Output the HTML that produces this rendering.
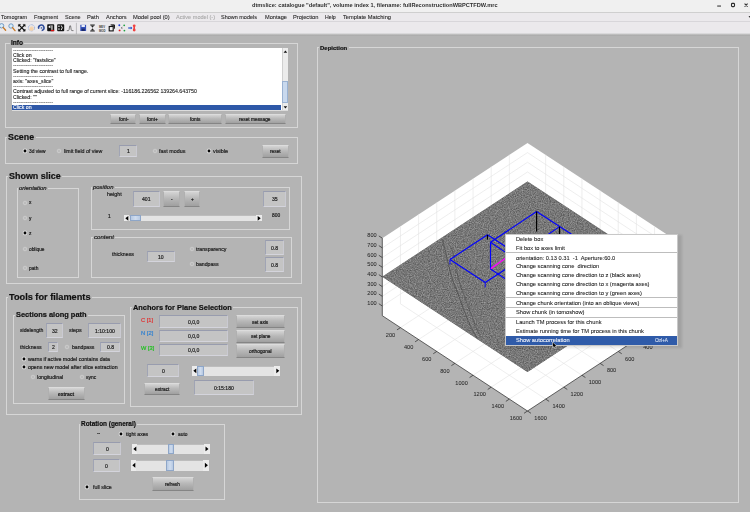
<!DOCTYPE html>
<html><head><meta charset="utf-8"><style>
html,body{margin:0;padding:0;}
body{width:750px;height:512px;overflow:hidden;position:relative;background:#b4b4b4;font-family:"Liberation Sans",sans-serif;}
.t{position:absolute;white-space:nowrap;-webkit-text-stroke:0.2px currentColor;will-change:transform;}
.r{position:absolute;}
</style></head><body>
<div class="r" style="left:0.00px;top:0.00px;width:750.00px;height:12.00px;background:#f0f0f0;"></div>
<div class="r" style="left:0.00px;top:11.50px;width:750.00px;height:1.00px;background:#cfcfcf;"></div>
<div class="r" style="left:0.00px;top:12.50px;width:750.00px;height:9.00px;background:#ebe9ec;"></div>
<div class="r" style="left:0.00px;top:21.20px;width:750.00px;height:0.80px;background:#d8d6da;"></div>
<div class="r" style="left:0.00px;top:22.00px;width:750.00px;height:11.00px;background:#ebe9ec;"></div>
<div class="r" style="left:0.00px;top:33.00px;width:750.00px;height:3.00px;background:linear-gradient(#e6e5e8,#c8c8c8 40%,#a8a8a8 70%,#b4b4b4);"></div>
<div class="t" style="left:252.30px;top:3.00px;font-size:5.64px;line-height:5.64px;font-weight:bold;color:#303030;-webkit-text-stroke:0px;">dtmslice: catalogue "default", volume index 1, filename: fullReconstructionWBPCTFDW.mrc</div>
<svg class="r" style="left:714px;top:0" width="36" height="12"><rect x="3.2" y="5.5" width="3.8" height="1.1" fill="#3a3a3a"/><rect x="17.5" y="3.4" width="3" height="3.2" rx="0.9" fill="none" stroke="#2a2a2a" stroke-width="1.1"/><path d="M30.6 3.6 L33.6 6.6 M33.6 3.6 L30.6 6.6" stroke="#2a2a2a" stroke-width="1.1"/></svg>
<div class="t" style="left:1.30px;top:15.00px;font-size:5.53px;line-height:5.53px;color:#2a2a2a;-webkit-text-stroke:0.1px currentColor;">Tomogram</div>
<div class="t" style="left:34.20px;top:15.00px;font-size:5.63px;line-height:5.63px;color:#2a2a2a;-webkit-text-stroke:0.1px currentColor;">Fragment</div>
<div class="t" style="left:65.40px;top:15.00px;font-size:5.50px;line-height:5.50px;color:#2a2a2a;-webkit-text-stroke:0.1px currentColor;">Scene</div>
<div class="t" style="left:87.40px;top:15.00px;font-size:5.79px;line-height:5.79px;color:#2a2a2a;-webkit-text-stroke:0.1px currentColor;">Path</div>
<div class="t" style="left:105.60px;top:15.00px;font-size:5.62px;line-height:5.62px;color:#2a2a2a;-webkit-text-stroke:0.1px currentColor;">Anchors</div>
<div class="t" style="left:132.50px;top:15.00px;font-size:5.74px;line-height:5.74px;color:#2a2a2a;-webkit-text-stroke:0.1px currentColor;">Model pool (0)</div>
<div class="t" style="left:175.60px;top:15.00px;font-size:5.58px;line-height:5.58px;color:#a8a8a8;-webkit-text-stroke:0.1px currentColor;">Active model (-)</div>
<div class="t" style="left:221.30px;top:15.00px;font-size:5.49px;line-height:5.49px;color:#2a2a2a;-webkit-text-stroke:0.1px currentColor;">Shown models</div>
<div class="t" style="left:264.80px;top:15.00px;font-size:5.63px;line-height:5.63px;color:#2a2a2a;-webkit-text-stroke:0.1px currentColor;">Montage</div>
<div class="t" style="left:293.30px;top:15.00px;font-size:5.71px;line-height:5.71px;color:#2a2a2a;-webkit-text-stroke:0.1px currentColor;">Projection</div>
<div class="t" style="left:325.30px;top:15.00px;font-size:5.20px;line-height:5.20px;color:#2a2a2a;-webkit-text-stroke:0.1px currentColor;">Help</div>
<div class="t" style="left:343.20px;top:15.00px;font-size:5.73px;line-height:5.73px;color:#2a2a2a;-webkit-text-stroke:0.1px currentColor;">Template Matching</div>
<svg class="r" style="left:747.5px;top:15px" width="5" height="5"><polygon points="0.5,1 4.5,1 2.5,3.6" fill="#333"/></svg>
<svg class="r" style="left:0;top:22px" width="140" height="13" viewBox="0 0 140 13">
 <circle cx="1.6" cy="3.8" r="2.2" fill="#d8ecfa" stroke="#5a86b8" stroke-width="0.8"/><line x1="3.1" y1="5.4" x2="5.6" y2="8.3" stroke="#c87a28" stroke-width="1.4" stroke-linecap="round"/>
 <circle cx="11" cy="4" r="2.2" fill="#d8ecfa" stroke="#5a86b8" stroke-width="0.8"/><line x1="12.5" y1="5.6" x2="15" y2="8.6" stroke="#c87a28" stroke-width="1.4" stroke-linecap="round"/>
 <path d="M19 3 L24.6 8.6 M24.6 3 L19 8.6" stroke="#111" stroke-width="1.2"/>
 <path d="M18.4 2.4 l2.2 0 l-2.2 2.2 z M25.2 2.4 l-2.2 0 l2.2 2.2 z M18.4 9.2 l2.2 0 l-2.2 -2.2 z M25.2 9.2 l-2.2 0 l2.2 -2.2 z" fill="#111" stroke="#111" stroke-width="0.4"/>
 <circle cx="31.5" cy="5.8" r="3.1" fill="none" stroke="#6f8fd0" stroke-width="0.7" stroke-dasharray="0.9 0.6"/>
 <path d="M29.6 8.6 C29.4 6.6 29.6 5 30.4 4.2 L30.8 6 L31.2 3.4 L31.8 5.8 L32.4 3.6 L32.8 6 L33.6 4.6 C33.8 6.4 33.4 8 32.6 8.8 Z" fill="#f6d2a8"/>
 <circle cx="41.3" cy="5.8" r="2.7" fill="none" stroke="#2c4a98" stroke-width="1.5" stroke-dasharray="13 4" transform="rotate(160 41.3 5.8)"/>
 <circle cx="41.5" cy="5.9" r="0.9" fill="#5670b0"/>
 <rect x="47.2" y="2.2" width="7" height="7" rx="0.8" fill="#141414"/><path d="M48.2 5 L50.4 3 L50.4 6.2 Z" fill="#fff"/><rect x="51.4" y="3.3" width="1.1" height="4.6" fill="#fff"/><rect x="50.8" y="7.9" width="3.4" height="1.3" fill="#d81010"/>
 <rect x="57.2" y="2.2" width="7" height="7" rx="0.8" fill="#141414"/><rect x="58.3" y="3.6" width="1.3" height="1.3" fill="#fff"/><rect x="58.3" y="6.4" width="1.3" height="1.3" fill="#fff"/><path d="M61.2 3.4 Q63.4 5.7 61.2 8" fill="none" stroke="#fff" stroke-width="0.9"/>
 <path d="M66.8 8.6 h1.6 q0.5 0 0.7 -1 l0.6 -3.6 q0.3 -1 0.9 0 l0.6 3.6 q0.2 1 0.7 1 h1.6" fill="none" stroke="#333" stroke-width="0.6"/>
 <line x1="76.4" y1="0.8" x2="76.4" y2="12.2" stroke="#9a9a9e" stroke-width="0.6"/>
 <rect x="80.3" y="2.8" width="5.8" height="6.2" fill="#3450b8"/><rect x="81.5" y="2.8" width="3.4" height="2.2" fill="#e6ecfa"/><rect x="81.6" y="6.6" width="3.2" height="2.4" fill="#1c2a6a"/>
 <path d="M90.2 3 h4.6 M90.2 9 h4.6" stroke="#111" stroke-width="0.9"/><path d="M90.8 3.4 L92.5 5.8 L94.2 3.4 Z M90.8 8.6 L92.5 6.2 L94.2 8.6 Z" fill="#222"/>
 <text x="99" y="5.8" font-size="2.8" font-family="Liberation Sans" font-weight="bold" fill="#3a3a3a">MEV</text><text x="99" y="9.6" font-size="2.8" font-family="Liberation Sans" font-weight="bold" fill="#3a3a3a">MOD</text>
 <path d="M110.6 2.9 h3.8 v3.8 M111.6 3.9 h2.8" fill="none" stroke="#111" stroke-width="1"/><rect x="109.2" y="4.5" width="4" height="4.4" fill="#f0f0f0" stroke="#111" stroke-width="1.1"/>
 <circle cx="119.3" cy="3.3" r="0.95" fill="#1a3ad8"/><circle cx="124.2" cy="3.3" r="0.9" fill="#20a040"/><path d="M121 5.2 L122.5 6.6 M122.5 5.2 L121 6.6" stroke="#333" stroke-width="0.5"/><circle cx="119.6" cy="8.4" r="0.95" fill="#e01818"/><circle cx="124.4" cy="8.6" r="0.9" fill="#20a040"/>
 <path d="M128.2 6 h3.2" stroke="#2050d0" stroke-width="1.2"/><polygon points="130.8,4.6 132.4,6 130.8,7.4" fill="#2050d0"/><circle cx="134.2" cy="3.8" r="1.4" fill="#f04040"/><circle cx="134.2" cy="8" r="1.4" fill="#f04040"/><rect x="133.4" y="4.8" width="1.6" height="2.4" fill="#f04040"/>
</svg>
<div class="r" style="left:5.00px;top:43.00px;width:293.00px;height:85.00px;border:1px solid #d6d6d6;box-sizing:border-box;"></div>
<div class="r" style="left:9.70px;top:42.60px;width:14.59px;height:2.40px;background:#b4b4b4;"></div>
<div class="t" style="left:10.70px;top:40.00px;font-size:6.60px;line-height:6.60px;font-weight:bold;color:#111;">Info</div>
<div class="r" style="left:12.00px;top:48.00px;width:276.20px;height:63.40px;background:#fff;border-bottom:1.2px solid #dcdcdc;box-sizing:border-box;"></div>
<div class="r" style="left:12.40px;top:104.80px;width:269.10px;height:5.20px;background:#2e58a8;"></div>
<div class="t" style="left:13.20px;top:48.00px;font-size:5.46px;line-height:5.46px;color:#333;-webkit-text-stroke:0.1px currentColor;">----------------------</div>
<div class="t" style="left:13.00px;top:53.00px;font-size:5.24px;line-height:5.24px;color:#1a1a1a;-webkit-text-stroke:0.1px currentColor;">Click on</div>
<div class="t" style="left:13.00px;top:58.00px;font-size:5.24px;line-height:5.24px;color:#1a1a1a;-webkit-text-stroke:0.1px currentColor;">Clicked: "fastslice"</div>
<div class="t" style="left:13.20px;top:63.00px;font-size:5.46px;line-height:5.46px;color:#333;-webkit-text-stroke:0.1px currentColor;">----------------------</div>
<div class="t" style="left:13.00px;top:69.00px;font-size:5.24px;line-height:5.24px;color:#1a1a1a;-webkit-text-stroke:0.1px currentColor;">Setting the contrast to full range.</div>
<div class="t" style="left:13.20px;top:74.00px;font-size:5.46px;line-height:5.46px;color:#333;-webkit-text-stroke:0.1px currentColor;">----------------------</div>
<div class="t" style="left:13.00px;top:79.00px;font-size:5.24px;line-height:5.24px;color:#1a1a1a;-webkit-text-stroke:0.1px currentColor;">axis: "axes_slice"</div>
<div class="t" style="left:13.20px;top:84.00px;font-size:5.46px;line-height:5.46px;color:#333;-webkit-text-stroke:0.1px currentColor;">----------------------</div>
<div class="t" style="left:13.00px;top:89.00px;font-size:5.24px;line-height:5.24px;color:#1a1a1a;-webkit-text-stroke:0.1px currentColor;">Contrast adjusted to full range of current slice: -116186.226562 139264.643750</div>
<div class="t" style="left:13.00px;top:95.00px;font-size:5.24px;line-height:5.24px;color:#1a1a1a;-webkit-text-stroke:0.1px currentColor;">Clicked: ""</div>
<div class="t" style="left:13.20px;top:100.00px;font-size:5.46px;line-height:5.46px;color:#333;-webkit-text-stroke:0.1px currentColor;">----------------------</div>
<div class="t" style="left:13.00px;top:105.00px;font-size:5.24px;line-height:5.24px;color:#fff;-webkit-text-stroke:0.1px currentColor;">Click on</div>
<div class="r" style="left:281.50px;top:48.00px;width:6.70px;height:62.30px;background:#ececec;border-left:0.6px solid #d0d0d0;box-sizing:border-box;"></div>
<div class="r" style="left:281.80px;top:80.80px;width:6.20px;height:22.50px;background:#c9d9ee;border:0.6px solid #9ab2d2;box-sizing:border-box;"></div>
<svg class="r" style="left:281.5px;top:48px" width="7" height="63"><polygon points="1.6,4.8 5.2,4.8 3.4,2.6" fill="#111"/><polygon points="1.6,58.2 5.2,58.2 3.4,60.4" fill="#111"/></svg>
<div class="r" style="left:110.30px;top:113.80px;width:26.10px;height:9.90px;background:linear-gradient(#d4d4d4,#b8b8b8 45%,#a0a0a0);border:1px solid #b0b0b0;border-bottom-color:#858585;border-top-color:#dcdcdc;box-sizing:border-box;border-radius:0.5px;"></div>
<div class="t" style="left:118.55px;top:118.00px;font-size:4.80px;line-height:4.80px;color:#1a1a1a;">font-</div>
<div class="r" style="left:139.20px;top:113.80px;width:26.50px;height:9.90px;background:linear-gradient(#d4d4d4,#b8b8b8 45%,#a0a0a0);border:1px solid #b0b0b0;border-bottom-color:#858585;border-top-color:#dcdcdc;box-sizing:border-box;border-radius:0.5px;"></div>
<div class="t" style="left:147.05px;top:118.00px;font-size:4.80px;line-height:4.80px;color:#1a1a1a;">font+</div>
<div class="r" style="left:168.10px;top:113.80px;width:53.60px;height:9.90px;background:linear-gradient(#d4d4d4,#b8b8b8 45%,#a0a0a0);border:1px solid #b0b0b0;border-bottom-color:#858585;border-top-color:#dcdcdc;box-sizing:border-box;border-radius:0.5px;"></div>
<div class="t" style="left:189.70px;top:118.00px;font-size:4.80px;line-height:4.80px;color:#1a1a1a;">fonts</div>
<div class="r" style="left:224.50px;top:113.80px;width:61.30px;height:9.90px;background:linear-gradient(#d4d4d4,#b8b8b8 45%,#a0a0a0);border:1px solid #b0b0b0;border-bottom-color:#858585;border-top-color:#dcdcdc;box-sizing:border-box;border-radius:0.5px;"></div>
<div class="t" style="left:239.41px;top:118.00px;font-size:4.80px;line-height:4.80px;color:#1a1a1a;">reset message</div>
<div class="r" style="left:5.00px;top:137.00px;width:293.00px;height:27.00px;border:1px solid #d6d6d6;box-sizing:border-box;"></div>
<div class="r" style="left:7.00px;top:136.10px;width:28.60px;height:2.40px;background:#b4b4b4;"></div>
<div class="t" style="left:8.00px;top:133.00px;font-size:8.86px;line-height:8.86px;font-weight:bold;color:#111;">Scene</div>
<svg class="r" style="left:21.60px;top:148.20px" width="6" height="6"><circle cx="3" cy="3" r="2.4" fill="#dcdcdc"/><circle cx="3" cy="3" r="1.4" fill="#050505"/></svg>
<div class="t" style="left:29.40px;top:150.00px;font-size:4.84px;line-height:4.84px;color:#1e1e1e;">3d view</div>
<svg class="r" style="left:56.20px;top:148.20px" width="6" height="6"><circle cx="3" cy="3" r="1.8" fill="#bcbcbc" stroke="#d2d2d2" stroke-width="0.7"/></svg>
<div class="t" style="left:63.60px;top:149.00px;font-size:5.28px;line-height:5.28px;color:#1e1e1e;">limit field of view</div>
<div class="r" style="left:119.40px;top:145.00px;width:17.60px;height:11.60px;background:#c4c4c4;border:1px solid #a0a4b4;border-top:1.3px solid #989cae;border-bottom-color:#d4d4dc;border-right-color:#cacad2;box-sizing:border-box;"></div>
<div class="t" style="left:126.78px;top:149.00px;font-size:5.10px;line-height:5.10px;color:#222;">1</div>
<svg class="r" style="left:151.90px;top:148.20px" width="6" height="6"><circle cx="3" cy="3" r="1.8" fill="#bcbcbc" stroke="#d2d2d2" stroke-width="0.7"/></svg>
<div class="t" style="left:158.80px;top:149.00px;font-size:5.40px;line-height:5.40px;color:#1e1e1e;">fast modus</div>
<svg class="r" style="left:205.70px;top:148.20px" width="6" height="6"><circle cx="3" cy="3" r="2.4" fill="#dcdcdc"/><circle cx="3" cy="3" r="1.4" fill="#050505"/></svg>
<div class="t" style="left:212.50px;top:149.00px;font-size:5.40px;line-height:5.40px;color:#1e1e1e;">visible</div>
<div class="r" style="left:261.60px;top:144.50px;width:27.30px;height:13.20px;background:linear-gradient(#d4d4d4,#b8b8b8 45%,#a0a0a0);border:1px solid #b0b0b0;border-bottom-color:#858585;border-top-color:#dcdcdc;box-sizing:border-box;border-radius:0.5px;"></div>
<div class="t" style="left:269.91px;top:150.00px;font-size:4.80px;line-height:4.80px;color:#1a1a1a;">reset</div>
<div class="r" style="left:6.00px;top:176.00px;width:296.00px;height:108.00px;border:1px solid #d6d6d6;box-sizing:border-box;"></div>
<div class="r" style="left:7.70px;top:175.00px;width:54.20px;height:2.40px;background:#b4b4b4;"></div>
<div class="t" style="left:8.70px;top:172.00px;font-size:8.95px;line-height:8.95px;font-weight:bold;color:#111;">Shown slice</div>
<div class="r" style="left:17.00px;top:188.00px;width:62.00px;height:90.00px;border:1px solid #d6d6d6;box-sizing:border-box;"></div>
<div class="r" style="left:18.20px;top:187.20px;width:30.10px;height:2.40px;background:#b4b4b4;"></div>
<div class="t" style="left:19.20px;top:186.00px;font-size:5.91px;line-height:5.91px;color:#1a1a1a;font-style:italic;">orientation</div>
<svg class="r" style="left:21.60px;top:199.50px" width="6" height="6"><circle cx="3" cy="3" r="1.8" fill="#bcbcbc" stroke="#d2d2d2" stroke-width="0.7"/></svg>
<div class="t" style="left:28.80px;top:201.00px;font-size:4.80px;line-height:4.80px;color:#1e1e1e;">x</div>
<svg class="r" style="left:21.60px;top:215.40px" width="6" height="6"><circle cx="3" cy="3" r="1.8" fill="#bcbcbc" stroke="#d2d2d2" stroke-width="0.7"/></svg>
<div class="t" style="left:28.80px;top:217.00px;font-size:4.80px;line-height:4.80px;color:#1e1e1e;">y</div>
<svg class="r" style="left:21.60px;top:230.40px" width="6" height="6"><circle cx="3" cy="3" r="2.4" fill="#dcdcdc"/><circle cx="3" cy="3" r="1.4" fill="#050505"/></svg>
<div class="t" style="left:28.80px;top:232.00px;font-size:4.80px;line-height:4.80px;color:#1e1e1e;">z</div>
<svg class="r" style="left:21.60px;top:245.60px" width="6" height="6"><circle cx="3" cy="3" r="1.8" fill="#bcbcbc" stroke="#d2d2d2" stroke-width="0.7"/></svg>
<div class="t" style="left:28.80px;top:248.00px;font-size:4.80px;line-height:4.80px;color:#1e1e1e;">oblique</div>
<svg class="r" style="left:21.60px;top:264.60px" width="6" height="6"><circle cx="3" cy="3" r="1.8" fill="#bcbcbc" stroke="#d2d2d2" stroke-width="0.7"/></svg>
<div class="t" style="left:28.80px;top:267.00px;font-size:4.80px;line-height:4.80px;color:#1e1e1e;">path</div>
<div class="r" style="left:91.00px;top:187.00px;width:199.00px;height:43.00px;border:1px solid #d6d6d6;box-sizing:border-box;"></div>
<div class="r" style="left:92.20px;top:186.10px;width:23.00px;height:2.40px;background:#b4b4b4;"></div>
<div class="t" style="left:93.20px;top:185.00px;font-size:5.95px;line-height:5.95px;color:#1a1a1a;font-style:italic;">position</div>
<div class="t" style="left:107.00px;top:192.00px;font-size:5.40px;line-height:5.40px;color:#1e1e1e;">height</div>
<div class="r" style="left:133.20px;top:191.10px;width:26.80px;height:15.70px;background:#c4c4c4;border:1px solid #a0a4b4;border-top:1.3px solid #989cae;border-bottom-color:#d4d4dc;border-right-color:#cacad2;box-sizing:border-box;"></div>
<div class="t" style="left:142.35px;top:197.00px;font-size:5.10px;line-height:5.10px;color:#222;">401</div>
<div class="r" style="left:163.10px;top:190.60px;width:16.70px;height:16.90px;background:linear-gradient(#d4d4d4,#b8b8b8 45%,#a0a0a0);border:1px solid #b0b0b0;border-bottom-color:#858585;border-top-color:#dcdcdc;box-sizing:border-box;border-radius:0.5px;"></div>
<div class="t" style="left:170.65px;top:198.00px;font-size:4.80px;line-height:4.80px;color:#1a1a1a;">-</div>
<div class="r" style="left:184.10px;top:190.60px;width:16.20px;height:16.90px;background:linear-gradient(#d4d4d4,#b8b8b8 45%,#a0a0a0);border:1px solid #b0b0b0;border-bottom-color:#858585;border-top-color:#dcdcdc;box-sizing:border-box;border-radius:0.5px;"></div>
<div class="t" style="left:190.80px;top:198.00px;font-size:4.80px;line-height:4.80px;color:#1a1a1a;">+</div>
<div class="r" style="left:263.40px;top:191.00px;width:22.50px;height:15.70px;background:#c4c4c4;border:1px solid #a0a4b4;border-top:1.3px solid #989cae;border-bottom-color:#d4d4dc;border-right-color:#cacad2;box-sizing:border-box;"></div>
<div class="t" style="left:271.81px;top:197.00px;font-size:5.10px;line-height:5.10px;color:#222;">35</div>
<div class="t" style="left:108.00px;top:215.00px;font-size:4.80px;line-height:4.80px;color:#1e1e1e;">1</div>
<div class="r" style="left:124.00px;top:214.60px;width:138.00px;height:6.60px;background:#e4e4e4;border-top:1px solid #bdbdbd;box-sizing:border-box;"></div>
<div class="r" style="left:124.00px;top:214.60px;width:5.00px;height:6.60px;background:#ececec;"></div>
<div class="r" style="left:256.00px;top:214.60px;width:6.00px;height:6.60px;background:#ececec;"></div>
<svg class="r" style="left:124.00px;top:214.60px" width="138.00" height="6.60"><polygon points="1.3,3.299999999999997 4.3,0.8999999999999972 4.3,5.6999999999999975" fill="#000"/><polygon points="136.7,3.299999999999997 133.7,0.8999999999999972 133.7,5.6999999999999975" fill="#000"/></svg>
<div class="r" style="left:129.60px;top:214.60px;width:11.10px;height:6.60px;background:linear-gradient(90deg,#b6c9e3,#cfdcee,#b6c9e3);border:0.8px solid #8ea6c8;box-sizing:border-box;"></div>
<div class="t" style="left:271.90px;top:214.00px;font-size:4.86px;line-height:4.86px;color:#1e1e1e;">800</div>
<div class="r" style="left:91.00px;top:237.00px;width:201.00px;height:41.00px;border:1px solid #d6d6d6;box-sizing:border-box;"></div>
<div class="r" style="left:92.80px;top:236.10px;width:22.40px;height:2.40px;background:#b4b4b4;"></div>
<div class="t" style="left:93.80px;top:234.00px;font-size:6.07px;line-height:6.07px;color:#1a1a1a;font-style:italic;">content</div>
<div class="t" style="left:112.00px;top:252.00px;font-size:5.28px;line-height:5.28px;color:#1e1e1e;">thickness</div>
<div class="r" style="left:147.20px;top:251.40px;width:27.80px;height:10.90px;background:#c4c4c4;border:1px solid #a0a4b4;border-top:1.3px solid #989cae;border-bottom-color:#d4d4dc;border-right-color:#cacad2;box-sizing:border-box;"></div>
<div class="t" style="left:158.26px;top:255.00px;font-size:5.10px;line-height:5.10px;color:#222;">10</div>
<svg class="r" style="left:188.50px;top:245.50px" width="6" height="6"><circle cx="3" cy="3" r="1.8" fill="#bcbcbc" stroke="#d2d2d2" stroke-width="0.7"/></svg>
<div class="t" style="left:195.90px;top:247.00px;font-size:5.28px;line-height:5.28px;color:#1e1e1e;">transparency</div>
<svg class="r" style="left:188.50px;top:261.00px" width="6" height="6"><circle cx="3" cy="3" r="1.8" fill="#bcbcbc" stroke="#d2d2d2" stroke-width="0.7"/></svg>
<div class="t" style="left:195.90px;top:262.00px;font-size:5.21px;line-height:5.21px;color:#1e1e1e;">bandpass</div>
<div class="r" style="left:264.50px;top:240.30px;width:19.10px;height:15.20px;background:#c4c4c4;border:1px solid #a0a4b4;border-top:1.3px solid #989cae;border-bottom-color:#d4d4dc;border-right-color:#cacad2;box-sizing:border-box;"></div>
<div class="t" style="left:270.51px;top:246.00px;font-size:5.10px;line-height:5.10px;color:#222;">0.8</div>
<div class="r" style="left:264.50px;top:256.70px;width:19.10px;height:15.80px;background:#c4c4c4;border:1px solid #a0a4b4;border-top:1.3px solid #989cae;border-bottom-color:#d4d4dc;border-right-color:#cacad2;box-sizing:border-box;"></div>
<div class="t" style="left:270.51px;top:263.00px;font-size:5.10px;line-height:5.10px;color:#222;">0.8</div>
<div class="r" style="left:6.00px;top:297.00px;width:296.00px;height:118.00px;border:1px solid #d6d6d6;box-sizing:border-box;"></div>
<div class="r" style="left:8.40px;top:296.60px;width:84.10px;height:2.40px;background:#b4b4b4;"></div>
<div class="t" style="left:9.40px;top:293.00px;font-size:9.20px;line-height:9.20px;font-weight:bold;color:#111;">Tools for filaments</div>
<div class="r" style="left:13.00px;top:315.00px;width:112.00px;height:89.00px;border:1px solid #d6d6d6;box-sizing:border-box;"></div>
<div class="r" style="left:14.80px;top:314.40px;width:73.10px;height:2.40px;background:#b4b4b4;"></div>
<div class="t" style="left:15.80px;top:311.00px;font-size:7.43px;line-height:7.43px;font-weight:bold;color:#111;">Sections along path</div>
<div class="t" style="left:19.80px;top:328.00px;font-size:5.13px;line-height:5.13px;color:#1e1e1e;">sidelength</div>
<div class="r" style="left:46.20px;top:323.20px;width:17.30px;height:14.80px;background:#c4c4c4;border:1px solid #a0a4b4;border-top:1.3px solid #989cae;border-bottom-color:#d4d4dc;border-right-color:#cacad2;box-sizing:border-box;"></div>
<div class="t" style="left:52.01px;top:329.00px;font-size:5.10px;line-height:5.10px;color:#222;">32</div>
<div class="t" style="left:69.10px;top:328.00px;font-size:5.31px;line-height:5.31px;color:#1e1e1e;">steps</div>
<div class="r" style="left:88.40px;top:323.00px;width:32.30px;height:15.00px;background:#c4c4c4;border:1px solid #a0a4b4;border-top:1.3px solid #989cae;border-bottom-color:#d4d4dc;border-right-color:#cacad2;box-sizing:border-box;"></div>
<div class="t" style="left:94.62px;top:329.00px;font-size:5.10px;line-height:5.10px;color:#222;">1:10:100</div>
<div class="t" style="left:20.30px;top:345.00px;font-size:5.18px;line-height:5.18px;color:#1e1e1e;">thickness</div>
<div class="r" style="left:47.80px;top:341.70px;width:10.60px;height:9.90px;background:#c4c4c4;border:1px solid #a0a4b4;border-top:1.3px solid #989cae;border-bottom-color:#d4d4dc;border-right-color:#cacad2;box-sizing:border-box;"></div>
<div class="t" style="left:51.68px;top:345.00px;font-size:5.10px;line-height:5.10px;color:#222;">2</div>
<svg class="r" style="left:64.30px;top:343.60px" width="6" height="6"><circle cx="3" cy="3" r="1.8" fill="#bcbcbc" stroke="#d2d2d2" stroke-width="0.7"/></svg>
<div class="t" style="left:71.60px;top:345.00px;font-size:5.17px;line-height:5.17px;color:#1e1e1e;">bandpass</div>
<div class="r" style="left:100.40px;top:341.70px;width:19.80px;height:9.90px;background:#c4c4c4;border:1px solid #a0a4b4;border-top:1.3px solid #989cae;border-bottom-color:#d4d4dc;border-right-color:#cacad2;box-sizing:border-box;"></div>
<div class="t" style="left:106.76px;top:345.00px;font-size:5.10px;line-height:5.10px;color:#222;">0.8</div>
<svg class="r" style="left:20.60px;top:356.00px" width="6" height="6"><circle cx="3" cy="3" r="2.4" fill="#dcdcdc"/><circle cx="3" cy="3" r="1.4" fill="#050505"/></svg>
<div class="t" style="left:27.90px;top:357.00px;font-size:5.28px;line-height:5.28px;color:#1e1e1e;">warns if active model contains data</div>
<svg class="r" style="left:20.60px;top:364.10px" width="6" height="6"><circle cx="3" cy="3" r="2.4" fill="#dcdcdc"/><circle cx="3" cy="3" r="1.4" fill="#050505"/></svg>
<div class="t" style="left:27.90px;top:365.00px;font-size:5.27px;line-height:5.27px;color:#1e1e1e;">opens new model after slice extraction</div>
<svg class="r" style="left:30.00px;top:373.80px" width="6" height="6"><circle cx="3" cy="3" r="1.8" fill="#bcbcbc" stroke="#d2d2d2" stroke-width="0.7"/></svg>
<div class="t" style="left:37.30px;top:375.00px;font-size:5.18px;line-height:5.18px;color:#1e1e1e;">longitudinal</div>
<svg class="r" style="left:78.80px;top:373.80px" width="6" height="6"><circle cx="3" cy="3" r="1.8" fill="#bcbcbc" stroke="#d2d2d2" stroke-width="0.7"/></svg>
<div class="t" style="left:86.40px;top:376.00px;font-size:4.91px;line-height:4.91px;color:#1e1e1e;">sync</div>
<div class="r" style="left:47.80px;top:387.20px;width:36.80px;height:12.80px;background:linear-gradient(#d4d4d4,#b8b8b8 45%,#a0a0a0);border:1px solid #b0b0b0;border-bottom-color:#858585;border-top-color:#dcdcdc;box-sizing:border-box;border-radius:0.5px;"></div>
<div class="t" style="left:58.17px;top:393.00px;font-size:4.90px;line-height:4.90px;font-weight:bold;color:#1a1a1a;">extract</div>
<div class="r" style="left:130.00px;top:307.00px;width:168.00px;height:100.00px;border:1px solid #d6d6d6;box-sizing:border-box;"></div>
<div class="r" style="left:132.20px;top:306.50px;width:101.30px;height:2.40px;background:#b4b4b4;"></div>
<div class="t" style="left:133.20px;top:304.00px;font-size:7.41px;line-height:7.41px;font-weight:bold;color:#111;">Anchors for Plane Selection</div>
<div class="t" style="left:140.80px;top:318.00px;font-size:5.78px;line-height:5.78px;color:#e03030;">C [1]</div>
<div class="t" style="left:140.80px;top:331.00px;font-size:5.87px;line-height:5.87px;color:#3080d0;">N [2]</div>
<div class="t" style="left:140.80px;top:346.00px;font-size:5.66px;line-height:5.66px;color:#20c020;">W [3]</div>
<div class="r" style="left:159.30px;top:315.30px;width:69.10px;height:12.70px;background:#c4c4c4;border:1px solid #a0a4b4;border-top:1.3px solid #989cae;border-bottom-color:#d4d4dc;border-right-color:#cacad2;box-sizing:border-box;"></div>
<div class="t" style="left:188.18px;top:320.00px;font-size:5.10px;line-height:5.10px;color:#222;">0,0,0</div>
<div class="r" style="left:159.30px;top:329.80px;width:69.10px;height:12.60px;background:#c4c4c4;border:1px solid #a0a4b4;border-top:1.3px solid #989cae;border-bottom-color:#d4d4dc;border-right-color:#cacad2;box-sizing:border-box;"></div>
<div class="t" style="left:188.18px;top:334.00px;font-size:5.10px;line-height:5.10px;color:#222;">0,0,0</div>
<div class="r" style="left:159.30px;top:343.70px;width:69.10px;height:12.70px;background:#c4c4c4;border:1px solid #a0a4b4;border-top:1.3px solid #989cae;border-bottom-color:#d4d4dc;border-right-color:#cacad2;box-sizing:border-box;"></div>
<div class="t" style="left:188.18px;top:348.00px;font-size:5.10px;line-height:5.10px;color:#222;">0,0,0</div>
<div class="r" style="left:236.00px;top:314.80px;width:48.70px;height:13.70px;background:linear-gradient(#d4d4d4,#b8b8b8 45%,#a0a0a0);border:1px solid #b0b0b0;border-bottom-color:#858585;border-top-color:#dcdcdc;box-sizing:border-box;border-radius:0.5px;"></div>
<div class="t" style="left:252.21px;top:321.00px;font-size:4.80px;line-height:4.80px;color:#1a1a1a;">set axis</div>
<div class="r" style="left:236.00px;top:329.80px;width:48.70px;height:12.90px;background:linear-gradient(#d4d4d4,#b8b8b8 45%,#a0a0a0);border:1px solid #b0b0b0;border-bottom-color:#858585;border-top-color:#dcdcdc;box-sizing:border-box;border-radius:0.5px;"></div>
<div class="t" style="left:250.61px;top:335.00px;font-size:4.80px;line-height:4.80px;color:#1a1a1a;">set plane</div>
<div class="r" style="left:236.00px;top:344.00px;width:48.70px;height:13.60px;background:linear-gradient(#d4d4d4,#b8b8b8 45%,#a0a0a0);border:1px solid #b0b0b0;border-bottom-color:#858585;border-top-color:#dcdcdc;box-sizing:border-box;border-radius:0.5px;"></div>
<div class="t" style="left:249.01px;top:350.00px;font-size:4.80px;line-height:4.80px;color:#1a1a1a;">orthogonal</div>
<div class="r" style="left:147.10px;top:364.20px;width:31.70px;height:12.70px;background:#c4c4c4;border:1px solid #a0a4b4;border-top:1.3px solid #989cae;border-bottom-color:#d4d4dc;border-right-color:#cacad2;box-sizing:border-box;"></div>
<div class="t" style="left:161.53px;top:369.00px;font-size:5.10px;line-height:5.10px;color:#222;">0</div>
<div class="r" style="left:191.70px;top:366.40px;width:88.60px;height:9.70px;background:#e4e4e4;border-top:1px solid #bdbdbd;box-sizing:border-box;"></div>
<div class="r" style="left:191.70px;top:366.40px;width:5.00px;height:9.70px;background:#ececec;"></div>
<div class="r" style="left:274.30px;top:366.40px;width:6.00px;height:9.70px;background:#ececec;"></div>
<svg class="r" style="left:191.70px;top:366.40px" width="88.60" height="9.70"><polygon points="1.3,4.850000000000023 4.3,2.450000000000023 4.3,7.250000000000023" fill="#000"/><polygon points="87.30000000000003,4.850000000000023 84.30000000000003,2.450000000000023 84.30000000000003,7.250000000000023" fill="#000"/></svg>
<div class="r" style="left:197.30px;top:366.40px;width:7.00px;height:9.70px;background:linear-gradient(90deg,#b6c9e3,#cfdcee,#b6c9e3);border:0.8px solid #8ea6c8;box-sizing:border-box;"></div>
<div class="r" style="left:144.00px;top:382.70px;width:36.00px;height:11.90px;background:linear-gradient(#d4d4d4,#b8b8b8 45%,#a0a0a0);border:1px solid #b0b0b0;border-bottom-color:#858585;border-top-color:#dcdcdc;box-sizing:border-box;border-radius:0.5px;"></div>
<div class="t" style="left:154.80px;top:388.00px;font-size:4.80px;line-height:4.80px;color:#1a1a1a;">extract</div>
<div class="r" style="left:193.50px;top:380.40px;width:60.80px;height:14.20px;background:#c4c4c4;border:1px solid #a0a4b4;border-top:1.3px solid #989cae;border-bottom-color:#d4d4dc;border-right-color:#cacad2;box-sizing:border-box;"></div>
<div class="t" style="left:213.97px;top:386.00px;font-size:5.10px;line-height:5.10px;color:#222;">0:15:180</div>
<div class="r" style="left:79.00px;top:424.00px;width:146.00px;height:76.00px;border:1px solid #d6d6d6;box-sizing:border-box;"></div>
<div class="r" style="left:79.90px;top:423.50px;width:57.40px;height:2.40px;background:#b4b4b4;"></div>
<div class="t" style="left:80.90px;top:421.00px;font-size:6.42px;line-height:6.42px;font-weight:bold;color:#111;">Rotation (general)</div>
<div class="t" style="left:97.20px;top:432.00px;font-size:4.80px;line-height:4.80px;color:#1e1e1e;">--</div>
<svg class="r" style="left:118.20px;top:431.00px" width="6" height="6"><circle cx="3" cy="3" r="2.4" fill="#dcdcdc"/><circle cx="3" cy="3" r="1.4" fill="#050505"/></svg>
<div class="t" style="left:125.60px;top:432.00px;font-size:5.19px;line-height:5.19px;color:#1e1e1e;">tight axes</div>
<svg class="r" style="left:169.50px;top:431.00px" width="6" height="6"><circle cx="3" cy="3" r="2.4" fill="#dcdcdc"/><circle cx="3" cy="3" r="1.4" fill="#050505"/></svg>
<div class="t" style="left:178.40px;top:433.00px;font-size:4.88px;line-height:4.88px;color:#1e1e1e;">auto</div>
<div class="r" style="left:93.40px;top:442.40px;width:27.60px;height:12.30px;background:#c4c4c4;border:1px solid #a0a4b4;border-top:1.3px solid #989cae;border-bottom-color:#d4d4dc;border-right-color:#cacad2;box-sizing:border-box;"></div>
<div class="t" style="left:105.78px;top:447.00px;font-size:5.10px;line-height:5.10px;color:#222;">0</div>
<div class="r" style="left:131.70px;top:444.00px;width:77.80px;height:9.80px;background:#e4e4e4;border-top:1px solid #bdbdbd;box-sizing:border-box;"></div>
<div class="r" style="left:131.70px;top:444.00px;width:5.00px;height:9.80px;background:#ececec;"></div>
<div class="r" style="left:203.50px;top:444.00px;width:6.00px;height:9.80px;background:#ececec;"></div>
<svg class="r" style="left:131.70px;top:444.00px" width="77.80" height="9.80"><polygon points="1.3,4.900000000000006 4.3,2.5000000000000058 4.3,7.300000000000006" fill="#000"/><polygon points="76.50000000000001,4.900000000000006 73.50000000000001,2.5000000000000058 73.50000000000001,7.300000000000006" fill="#000"/></svg>
<div class="r" style="left:167.50px;top:444.00px;width:6.80px;height:9.80px;background:linear-gradient(90deg,#b6c9e3,#cfdcee,#b6c9e3);border:0.8px solid #8ea6c8;box-sizing:border-box;"></div>
<div class="r" style="left:93.40px;top:459.20px;width:26.90px;height:12.50px;background:#c4c4c4;border:1px solid #a0a4b4;border-top:1.3px solid #989cae;border-bottom-color:#d4d4dc;border-right-color:#cacad2;box-sizing:border-box;"></div>
<div class="t" style="left:105.43px;top:464.00px;font-size:5.10px;line-height:5.10px;color:#222;">0</div>
<div class="r" style="left:130.80px;top:460.30px;width:78.20px;height:10.50px;background:#e4e4e4;border-top:1px solid #bdbdbd;box-sizing:border-box;"></div>
<div class="r" style="left:130.80px;top:460.30px;width:5.00px;height:10.50px;background:#ececec;"></div>
<div class="r" style="left:203.00px;top:460.30px;width:6.00px;height:10.50px;background:#ececec;"></div>
<svg class="r" style="left:130.80px;top:460.30px" width="78.20" height="10.50"><polygon points="1.3,5.25 4.3,2.85 4.3,7.65" fill="#000"/><polygon points="76.89999999999999,5.25 73.89999999999999,2.85 73.89999999999999,7.65" fill="#000"/></svg>
<div class="r" style="left:166.40px;top:460.30px;width:7.20px;height:10.50px;background:linear-gradient(90deg,#b6c9e3,#cfdcee,#b6c9e3);border:0.8px solid #8ea6c8;box-sizing:border-box;"></div>
<svg class="r" style="left:83.60px;top:483.60px" width="6" height="6"><circle cx="3" cy="3" r="2.4" fill="#dcdcdc"/><circle cx="3" cy="3" r="1.4" fill="#050505"/></svg>
<div class="t" style="left:92.70px;top:485.00px;font-size:5.29px;line-height:5.29px;color:#1e1e1e;">full slice</div>
<div class="r" style="left:152.00px;top:477.30px;width:41.60px;height:13.70px;background:linear-gradient(#d4d4d4,#b8b8b8 45%,#a0a0a0);border:1px solid #b0b0b0;border-bottom-color:#858585;border-top-color:#dcdcdc;box-sizing:border-box;border-radius:0.5px;"></div>
<div class="t" style="left:165.33px;top:483.00px;font-size:4.80px;line-height:4.80px;color:#1a1a1a;">refresh</div>
<div class="r" style="left:317.00px;top:47.00px;width:422.00px;height:456.00px;border:1px solid #d6d6d6;box-sizing:border-box;"></div>
<div class="r" style="left:319.00px;top:46.40px;width:29.70px;height:2.40px;background:#b4b4b4;"></div>
<div class="t" style="left:320.00px;top:46.00px;font-size:5.97px;line-height:5.97px;font-weight:bold;color:#111;">Depiction</div>
<svg class="r" style="left:0;top:0" width="750" height="512" viewBox="0 0 750 512"><polygon points="527.50,142.90 382.30,238.20 382.30,315.70 527.50,411.00 672.70,315.70 672.70,238.20" fill="#ffffff"/><line x1="509.35" y1="232.31" x2="509.35" y2="154.81" stroke="#e3e3e3" stroke-width="0.6"/><line x1="545.65" y1="232.31" x2="545.65" y2="154.81" stroke="#e3e3e3" stroke-width="0.6"/><line x1="491.20" y1="244.22" x2="491.20" y2="166.72" stroke="#e3e3e3" stroke-width="0.6"/><line x1="563.80" y1="244.22" x2="563.80" y2="166.72" stroke="#e3e3e3" stroke-width="0.6"/><line x1="473.05" y1="256.14" x2="473.05" y2="178.64" stroke="#e3e3e3" stroke-width="0.6"/><line x1="581.95" y1="256.14" x2="581.95" y2="178.64" stroke="#e3e3e3" stroke-width="0.6"/><line x1="454.90" y1="268.05" x2="454.90" y2="190.55" stroke="#e3e3e3" stroke-width="0.6"/><line x1="600.10" y1="268.05" x2="600.10" y2="190.55" stroke="#e3e3e3" stroke-width="0.6"/><line x1="436.75" y1="279.96" x2="436.75" y2="202.46" stroke="#e3e3e3" stroke-width="0.6"/><line x1="618.25" y1="279.96" x2="618.25" y2="202.46" stroke="#e3e3e3" stroke-width="0.6"/><line x1="418.60" y1="291.88" x2="418.60" y2="214.38" stroke="#e3e3e3" stroke-width="0.6"/><line x1="636.40" y1="291.88" x2="636.40" y2="214.38" stroke="#e3e3e3" stroke-width="0.6"/><line x1="400.45" y1="303.79" x2="400.45" y2="226.29" stroke="#e3e3e3" stroke-width="0.6"/><line x1="654.55" y1="303.79" x2="654.55" y2="226.29" stroke="#e3e3e3" stroke-width="0.6"/><line x1="382.30" y1="306.01" x2="527.50" y2="210.71" stroke="#e3e3e3" stroke-width="0.6"/><line x1="672.70" y1="306.01" x2="527.50" y2="210.71" stroke="#e3e3e3" stroke-width="0.6"/><line x1="382.30" y1="296.32" x2="527.50" y2="201.03" stroke="#e3e3e3" stroke-width="0.6"/><line x1="672.70" y1="296.32" x2="527.50" y2="201.03" stroke="#e3e3e3" stroke-width="0.6"/><line x1="382.30" y1="286.64" x2="527.50" y2="191.34" stroke="#e3e3e3" stroke-width="0.6"/><line x1="672.70" y1="286.64" x2="527.50" y2="191.34" stroke="#e3e3e3" stroke-width="0.6"/><line x1="382.30" y1="276.95" x2="527.50" y2="181.65" stroke="#e3e3e3" stroke-width="0.6"/><line x1="672.70" y1="276.95" x2="527.50" y2="181.65" stroke="#e3e3e3" stroke-width="0.6"/><line x1="382.30" y1="267.26" x2="527.50" y2="171.96" stroke="#e3e3e3" stroke-width="0.6"/><line x1="672.70" y1="267.26" x2="527.50" y2="171.96" stroke="#e3e3e3" stroke-width="0.6"/><line x1="382.30" y1="257.57" x2="527.50" y2="162.28" stroke="#e3e3e3" stroke-width="0.6"/><line x1="672.70" y1="257.57" x2="527.50" y2="162.28" stroke="#e3e3e3" stroke-width="0.6"/><line x1="382.30" y1="247.89" x2="527.50" y2="152.59" stroke="#e3e3e3" stroke-width="0.6"/><line x1="672.70" y1="247.89" x2="527.50" y2="152.59" stroke="#e3e3e3" stroke-width="0.6"/><line x1="509.35" y1="232.31" x2="654.55" y2="327.61" stroke="#e3e3e3" stroke-width="0.6"/><line x1="545.65" y1="232.31" x2="400.45" y2="327.61" stroke="#e3e3e3" stroke-width="0.6"/><line x1="491.20" y1="244.22" x2="636.40" y2="339.52" stroke="#e3e3e3" stroke-width="0.6"/><line x1="563.80" y1="244.22" x2="418.60" y2="339.52" stroke="#e3e3e3" stroke-width="0.6"/><line x1="473.05" y1="256.14" x2="618.25" y2="351.44" stroke="#e3e3e3" stroke-width="0.6"/><line x1="581.95" y1="256.14" x2="436.75" y2="351.44" stroke="#e3e3e3" stroke-width="0.6"/><line x1="454.90" y1="268.05" x2="600.10" y2="363.35" stroke="#e3e3e3" stroke-width="0.6"/><line x1="600.10" y1="268.05" x2="454.90" y2="363.35" stroke="#e3e3e3" stroke-width="0.6"/><line x1="436.75" y1="279.96" x2="581.95" y2="375.26" stroke="#e3e3e3" stroke-width="0.6"/><line x1="618.25" y1="279.96" x2="473.05" y2="375.26" stroke="#e3e3e3" stroke-width="0.6"/><line x1="418.60" y1="291.88" x2="563.80" y2="387.18" stroke="#e3e3e3" stroke-width="0.6"/><line x1="636.40" y1="291.88" x2="491.20" y2="387.18" stroke="#e3e3e3" stroke-width="0.6"/><line x1="400.45" y1="303.79" x2="545.65" y2="399.09" stroke="#e3e3e3" stroke-width="0.6"/><line x1="654.55" y1="303.79" x2="509.35" y2="399.09" stroke="#e3e3e3" stroke-width="0.6"/><defs><filter id="nz" x="0" y="0" width="1" height="1" color-interpolation-filters="sRGB"><feTurbulence type="fractalNoise" baseFrequency="0.85" numOctaves="2" seed="5"/><feColorMatrix type="matrix" values="0.4 0 0 0 0.27  0.4 0 0 0 0.27  0.4 0 0 0 0.27  0 0 0 0 1"/><feGaussianBlur stdDeviation="0.25"/></filter><clipPath id="sc"><polygon points="527.50,181.40 382.30,276.70 527.50,372.00 672.70,276.70"/></clipPath></defs><polygon points="527.50,181.40 382.30,276.70 527.50,372.00 672.70,276.70" fill="#7a7a7a"/><g clip-path="url(#sc)"><rect x="380" y="180" width="296" height="195" filter="url(#nz)"/><path d="M442.5 238.8 C447 258 450 274 455 286 S466 318 474 333 L480 343" fill="none" stroke="#404040" stroke-width="1" opacity="0.6"/><path d="M444 238.8 C448.5 258 451.5 274 456.5 286 S467.5 318 475.5 333 L481.5 343" fill="none" stroke="#a8a8a8" stroke-width="0.6" opacity="0.35"/><path d="M451.9 248 C455 262 458 280 462 290 S472 318 480 336" fill="none" stroke="#404040" stroke-width="0.9" opacity="0.5"/></g><line x1="382.30" y1="238.20" x2="382.30" y2="315.70" stroke="#262626" stroke-width="0.7"/><line x1="382.30" y1="315.70" x2="527.50" y2="411.00" stroke="#262626" stroke-width="0.7"/><line x1="527.50" y1="411.00" x2="672.70" y2="315.70" stroke="#262626" stroke-width="0.7"/><line x1="382.30" y1="306.01" x2="378.82" y2="303.73" stroke="#262626" stroke-width="0.7"/><text x="372.00" y="305.13" font-size="5.6" text-anchor="middle" fill="#2a2a2a" stroke="#2a2a2a" stroke-width="0.05" font-family="Liberation Sans">100</text><line x1="382.30" y1="296.32" x2="378.82" y2="294.04" stroke="#262626" stroke-width="0.7"/><text x="372.00" y="295.44" font-size="5.6" text-anchor="middle" fill="#2a2a2a" stroke="#2a2a2a" stroke-width="0.05" font-family="Liberation Sans">200</text><line x1="382.30" y1="286.64" x2="378.82" y2="284.35" stroke="#262626" stroke-width="0.7"/><text x="372.00" y="285.75" font-size="5.6" text-anchor="middle" fill="#2a2a2a" stroke="#2a2a2a" stroke-width="0.05" font-family="Liberation Sans">300</text><line x1="382.30" y1="276.95" x2="378.82" y2="274.66" stroke="#262626" stroke-width="0.7"/><text x="372.00" y="276.07" font-size="5.6" text-anchor="middle" fill="#2a2a2a" stroke="#2a2a2a" stroke-width="0.05" font-family="Liberation Sans">400</text><line x1="382.30" y1="267.26" x2="378.82" y2="264.98" stroke="#262626" stroke-width="0.7"/><text x="372.00" y="266.38" font-size="5.6" text-anchor="middle" fill="#2a2a2a" stroke="#2a2a2a" stroke-width="0.05" font-family="Liberation Sans">500</text><line x1="382.30" y1="257.57" x2="378.82" y2="255.29" stroke="#262626" stroke-width="0.7"/><text x="372.00" y="256.69" font-size="5.6" text-anchor="middle" fill="#2a2a2a" stroke="#2a2a2a" stroke-width="0.05" font-family="Liberation Sans">600</text><line x1="382.30" y1="247.89" x2="378.82" y2="245.60" stroke="#262626" stroke-width="0.7"/><text x="372.00" y="247.00" font-size="5.6" text-anchor="middle" fill="#2a2a2a" stroke="#2a2a2a" stroke-width="0.05" font-family="Liberation Sans">700</text><line x1="382.30" y1="238.20" x2="378.82" y2="235.91" stroke="#262626" stroke-width="0.7"/><text x="372.00" y="237.32" font-size="5.6" text-anchor="middle" fill="#2a2a2a" stroke="#2a2a2a" stroke-width="0.05" font-family="Liberation Sans">800</text><line x1="400.45" y1="327.61" x2="396.97" y2="329.90" stroke="#262626" stroke-width="0.7"/><text x="395.15" y="336.93" font-size="5.6" text-anchor="end" fill="#2a2a2a" stroke="#2a2a2a" stroke-width="0.05" font-family="Liberation Sans">200</text><line x1="654.55" y1="327.61" x2="658.03" y2="329.90" stroke="#262626" stroke-width="0.7"/><text x="661.35" y="336.73" font-size="5.6" text-anchor="start" fill="#2a2a2a" stroke="#2a2a2a" stroke-width="0.05" font-family="Liberation Sans">200</text><line x1="418.60" y1="339.52" x2="415.12" y2="341.81" stroke="#262626" stroke-width="0.7"/><text x="413.30" y="348.84" font-size="5.6" text-anchor="end" fill="#2a2a2a" stroke="#2a2a2a" stroke-width="0.05" font-family="Liberation Sans">400</text><line x1="636.40" y1="339.52" x2="639.88" y2="341.81" stroke="#262626" stroke-width="0.7"/><text x="643.20" y="348.64" font-size="5.6" text-anchor="start" fill="#2a2a2a" stroke="#2a2a2a" stroke-width="0.05" font-family="Liberation Sans">400</text><line x1="436.75" y1="351.44" x2="433.27" y2="353.72" stroke="#262626" stroke-width="0.7"/><text x="431.45" y="360.75" font-size="5.6" text-anchor="end" fill="#2a2a2a" stroke="#2a2a2a" stroke-width="0.05" font-family="Liberation Sans">600</text><line x1="618.25" y1="351.44" x2="621.73" y2="353.72" stroke="#262626" stroke-width="0.7"/><text x="625.05" y="360.55" font-size="5.6" text-anchor="start" fill="#2a2a2a" stroke="#2a2a2a" stroke-width="0.05" font-family="Liberation Sans">600</text><line x1="454.90" y1="363.35" x2="451.42" y2="365.64" stroke="#262626" stroke-width="0.7"/><text x="449.60" y="372.67" font-size="5.6" text-anchor="end" fill="#2a2a2a" stroke="#2a2a2a" stroke-width="0.05" font-family="Liberation Sans">800</text><line x1="600.10" y1="363.35" x2="603.58" y2="365.64" stroke="#262626" stroke-width="0.7"/><text x="606.90" y="372.47" font-size="5.6" text-anchor="start" fill="#2a2a2a" stroke="#2a2a2a" stroke-width="0.05" font-family="Liberation Sans">800</text><line x1="473.05" y1="375.26" x2="469.57" y2="377.55" stroke="#262626" stroke-width="0.7"/><text x="467.75" y="384.58" font-size="5.6" text-anchor="end" fill="#2a2a2a" stroke="#2a2a2a" stroke-width="0.05" font-family="Liberation Sans">1000</text><line x1="581.95" y1="375.26" x2="585.43" y2="377.55" stroke="#262626" stroke-width="0.7"/><text x="588.75" y="384.38" font-size="5.6" text-anchor="start" fill="#2a2a2a" stroke="#2a2a2a" stroke-width="0.05" font-family="Liberation Sans">1000</text><line x1="491.20" y1="387.17" x2="487.72" y2="389.46" stroke="#262626" stroke-width="0.7"/><text x="485.90" y="396.49" font-size="5.6" text-anchor="end" fill="#2a2a2a" stroke="#2a2a2a" stroke-width="0.05" font-family="Liberation Sans">1200</text><line x1="563.80" y1="387.17" x2="567.28" y2="389.46" stroke="#262626" stroke-width="0.7"/><text x="570.60" y="396.29" font-size="5.6" text-anchor="start" fill="#2a2a2a" stroke="#2a2a2a" stroke-width="0.05" font-family="Liberation Sans">1200</text><line x1="509.35" y1="399.09" x2="505.87" y2="401.37" stroke="#262626" stroke-width="0.7"/><text x="504.05" y="408.40" font-size="5.6" text-anchor="end" fill="#2a2a2a" stroke="#2a2a2a" stroke-width="0.05" font-family="Liberation Sans">1400</text><line x1="545.65" y1="399.09" x2="549.13" y2="401.37" stroke="#262626" stroke-width="0.7"/><text x="552.45" y="408.20" font-size="5.6" text-anchor="start" fill="#2a2a2a" stroke="#2a2a2a" stroke-width="0.05" font-family="Liberation Sans">1400</text><line x1="527.50" y1="411.00" x2="524.02" y2="413.29" stroke="#262626" stroke-width="0.7"/><text x="522.20" y="420.32" font-size="5.6" text-anchor="end" fill="#2a2a2a" stroke="#2a2a2a" stroke-width="0.05" font-family="Liberation Sans">1600</text><line x1="527.50" y1="411.00" x2="530.98" y2="413.29" stroke="#262626" stroke-width="0.7"/><text x="534.30" y="420.12" font-size="5.6" text-anchor="start" fill="#2a2a2a" stroke="#2a2a2a" stroke-width="0.05" font-family="Liberation Sans">1600</text><line x1="536.60" y1="211.60" x2="490.50" y2="242.30" stroke="#0000ff" stroke-width="1.15"/><line x1="536.60" y1="211.60" x2="600.00" y2="252.80" stroke="#0000ff" stroke-width="1.15"/><line x1="490.50" y1="242.30" x2="520.00" y2="262.00" stroke="#0000ff" stroke-width="1.15"/><line x1="490.50" y1="242.30" x2="490.50" y2="268.90" stroke="#0000ff" stroke-width="1.15"/><line x1="490.50" y1="268.90" x2="520.00" y2="288.50" stroke="#0000ff" stroke-width="1.15"/><line x1="559.50" y1="226.60" x2="540.00" y2="240.00" stroke="#0000ff" stroke-width="1.15"/><line x1="487.50" y1="234.80" x2="450.00" y2="259.50" stroke="#0000ff" stroke-width="1.15"/><line x1="450.00" y1="259.50" x2="485.20" y2="282.40" stroke="#0000ff" stroke-width="1.15"/><line x1="485.20" y1="282.40" x2="520.00" y2="259.80" stroke="#0000ff" stroke-width="1.15"/><line x1="487.50" y1="234.80" x2="520.00" y2="256.00" stroke="#0000ff" stroke-width="1.15"/><line x1="450.00" y1="259.50" x2="450.00" y2="264.50" stroke="#0000ff" stroke-width="0.9"/><line x1="485.20" y1="282.40" x2="485.20" y2="287.40" stroke="#0000ff" stroke-width="0.9"/><line x1="490.80" y1="268.60" x2="520.00" y2="247.80" stroke="#ff00ff" stroke-width="1.3"/><line x1="536.60" y1="211.60" x2="536.60" y2="231.60" stroke="#000" stroke-width="1.2"/><line x1="559.50" y1="226.60" x2="559.50" y2="236.00" stroke="#000" stroke-width="1.2"/><line x1="487.50" y1="234.80" x2="487.50" y2="239.60" stroke="#000" stroke-width="1.2"/></svg>
<div class="r" style="left:505.50px;top:235.00px;width:176.00px;height:113.00px;background:rgba(0,0,0,0.10);filter:blur(1px);"></div>
<div class="r" style="left:504.60px;top:233.90px;width:173.40px;height:111.90px;background:#fff;border:0.6px solid #c8c8c8;box-sizing:border-box;"></div>
<div class="t" style="left:515.80px;top:236.92px;font-size:5.71px;line-height:5.71px;color:#1e1e1e;-webkit-text-stroke:0.08px currentColor;">Delete box</div>
<div class="t" style="left:515.80px;top:245.72px;font-size:5.71px;line-height:5.71px;color:#1e1e1e;-webkit-text-stroke:0.08px currentColor;">Fit box to axes limit</div>
<div class="r" style="left:505.60px;top:252.05px;width:171.40px;height:0.70px;background:#bdbdbd;"></div>
<div class="t" style="left:515.80px;top:255.72px;font-size:5.71px;line-height:5.71px;color:#1e1e1e;-webkit-text-stroke:0.08px currentColor;">orientation: 0.13 0.31&nbsp; -1&nbsp; Aperture:60.0</div>
<div class="t" style="left:515.80px;top:264.32px;font-size:5.71px;line-height:5.71px;color:#1e1e1e;-webkit-text-stroke:0.08px currentColor;">Change scanning cone&nbsp; direction</div>
<div class="t" style="left:515.80px;top:273.12px;font-size:5.71px;line-height:5.71px;color:#1e1e1e;-webkit-text-stroke:0.08px currentColor;">Change scanning cone direction to z (black axes)</div>
<div class="t" style="left:515.80px;top:282.22px;font-size:5.71px;line-height:5.71px;color:#1e1e1e;-webkit-text-stroke:0.08px currentColor;">Change scanning cone direction to x (magenta axes)</div>
<div class="t" style="left:515.80px;top:291.12px;font-size:5.71px;line-height:5.71px;color:#1e1e1e;-webkit-text-stroke:0.08px currentColor;">Change scanning cone direction to y (green axes)</div>
<div class="r" style="left:505.60px;top:297.35px;width:171.40px;height:0.70px;background:#bdbdbd;"></div>
<div class="t" style="left:515.80px;top:300.52px;font-size:5.71px;line-height:5.71px;color:#1e1e1e;-webkit-text-stroke:0.08px currentColor;">Change chunk orientation (into an oblique views)</div>
<div class="r" style="left:505.60px;top:306.95px;width:171.40px;height:0.70px;background:#bdbdbd;"></div>
<div class="t" style="left:515.80px;top:310.42px;font-size:5.71px;line-height:5.71px;color:#1e1e1e;-webkit-text-stroke:0.08px currentColor;">Show chunk (in tomoshow)</div>
<div class="r" style="left:505.60px;top:316.85px;width:171.40px;height:0.70px;background:#bdbdbd;"></div>
<div class="t" style="left:515.80px;top:320.02px;font-size:5.71px;line-height:5.71px;color:#1e1e1e;-webkit-text-stroke:0.08px currentColor;">Launch TM process for this chunk</div>
<div class="t" style="left:515.80px;top:328.62px;font-size:5.71px;line-height:5.71px;color:#1e1e1e;-webkit-text-stroke:0.08px currentColor;">Estimate running time for TM process in this chunk</div>
<div class="r" style="left:505.60px;top:336.30px;width:171.40px;height:8.60px;background:#2f5ba9;"></div>
<div class="t" style="left:515.80px;top:338.32px;font-size:5.71px;line-height:5.71px;color:#f4f6fb;-webkit-text-stroke:0.08px currentColor;">Show autocorrelation</div>
<div class="t" style="left:655.00px;top:338.76px;font-size:4.60px;line-height:4.60px;color:#dfe6f4;-webkit-text-stroke:0.08px currentColor;">Ctrl+A</div>
<svg class="r" style="left:551px;top:341px" width="8" height="9"><polygon points="1.5,1 1.5,6.8 3,5.6 4.3,7.8 5.2,7.3 4.2,5.2 6.2,5.2" fill="#000" stroke="#fff" stroke-width="0.5"/></svg>
</body></html>
